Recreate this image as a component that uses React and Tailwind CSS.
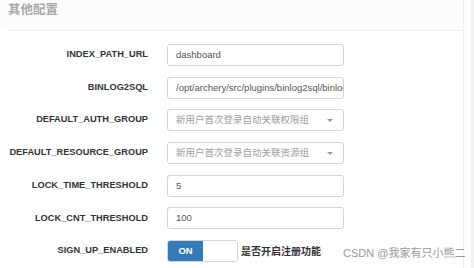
import React from 'react';

const rows = [
    { label: 'INDEX_PATH_URL', value: 'dashboard' },
    { label: 'BINLOG2SQL', value: '/opt/archery/src/plugins/binlog2sql/binlog2sql.py' },
    { label: 'DEFAULT_AUTH_GROUP', placeholder: '新用户首次登录自动关联权限组', select: true },
    { label: 'DEFAULT_RESOURCE_GROUP', placeholder: '新用户首次登录自动关联资源组', select: true },
    { label: 'LOCK_TIME_THRESHOLD', value: '5' },
    { label: 'LOCK_CNT_THRESHOLD', value: '100' },
];

const font = { fontFamily: '"Liberation Sans", Arial, "Noto Sans CJK SC", sans-serif' };

export default function App() {
    return (
        <div className="relative w-[474px] h-[268px] bg-white overflow-hidden" style={font}>
            {/* panel */}
            <div className="w-[464px] h-full border-r border-[#eeeeee]">
                <div className="h-[30px] bg-[#fcfcfc] pl-[8px] pt-[1px]">
                    <h4 className="text-[12.5px] font-bold text-[#a8a8a8] leading-[18px]">其他配置</h4>
                </div>
                <div className="ml-[8px] border-t border-[#ececec]" />

                <div className="flex flex-col gap-[10.7px] pt-[13px]">
                    {rows.map((r) => (
                        <div key={r.label} className="flex items-center h-[22px]">
                            <label className="w-[148px] text-right text-[9.25px] font-bold text-[#333]">{r.label}</label>
                            <div className="ml-[19px] w-[177px] h-[22px] border border-[#d4d4d4] rounded-[3px] flex items-center pl-[8px] pr-[10px] overflow-hidden">
                                {r.select ? (
                                    <>
                                        <span className="flex-1 text-[9.5px] text-[#a0a0a0] whitespace-nowrap">{r.placeholder}</span>
                                        <span className="w-0 h-0 border-l-[3px] border-r-[3px] border-t-[3px] border-l-transparent border-r-transparent border-t-[#999]" />
                                    </>
                                ) : (
                                    <span className="text-[9.5px] text-[#555] whitespace-nowrap">{r.value}</span>
                                )}
                            </div>
                        </div>
                    ))}
                    <div className="flex items-center h-[22px]">
                        <label className="w-[148px] text-right text-[9.25px] font-bold text-[#333]">SIGN_UP_ENABLED</label>
                        <div className="ml-[19px] w-[71px] h-[22px] border border-[#d4d4d4] rounded-[3px] flex overflow-hidden">
                            <div className="w-[35px] bg-[#337ab7] text-white text-[9.5px] font-bold flex items-center justify-center">ON</div>
                            <div className="flex-1 bg-white" />
                        </div>
                        <span className="ml-[3px] text-[10px] font-bold text-[#333]">是否开启注册功能</span>
                    </div>
                </div>
            </div>
            <div className="absolute right-0 top-0 w-[3px] h-full bg-[#f2f2f2]" />
            <span className="absolute left-[343px] top-[245px] text-[11px] text-[#9a9a9a] whitespace-nowrap">CSDN @我家有只小熊二</span>
        </div>
    );
}
